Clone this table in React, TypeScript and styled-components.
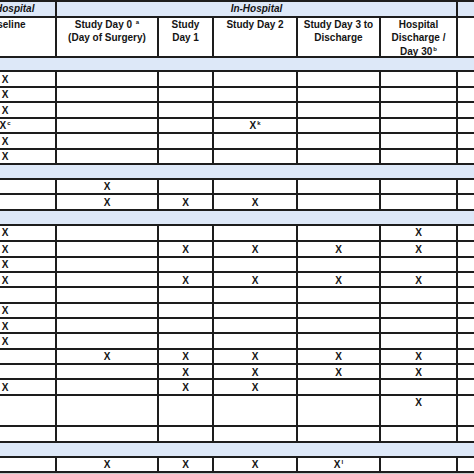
import React from "react";
import styled, { createGlobalStyle } from "styled-components";

const GlobalStyle = createGlobalStyle`
  body {
    margin: 0;
    background: #ffffff;
  }
`;

const Frame = styled.div`
  width: 474px;
  height: 474px;
  overflow: hidden;
  background: #ffffff;
`;

const Table = styled.table`
  border-collapse: collapse;
  table-layout: fixed;
  width: 583px;
  margin-left: -47px;
  font-family: "Liberation Sans", Arial, sans-serif;
  font-weight: bold;
  font-size: 10px;
  color: #141414;
`;

const Row = styled.tr<{ $h: number }>`
  height: ${(p) => p.$h}px;
`;

const Cell = styled.td`
  border: 2px solid #1d1d1d;
  padding: 1.5px 0 0;
  text-align: center;
  vertical-align: top;
  line-height: 11.5px;
`;

const BandCell = styled(Cell)`
  background: #dde8f8;
  font-style: italic;
  vertical-align: middle;
  padding: 0;
  line-height: 12px;
`;

const HeadCell = styled(Cell)`
  padding: 0;
`;

const HeadText = styled.div`
  height: 36px;
  line-height: 13.5px;
`;

const SectionCell = styled.td`
  background: #dde8f8;
  border: 2px solid #1d1d1d;
  border-left: none;
  border-right: none;
  padding: 0;
`;

const GreyCell = styled.td`
  background: #c9c9c9;
  padding: 0;
`;

const Sup = styled.sup`
  font-size: 6px;
  line-height: 0;
  vertical-align: 4px;
  margin-left: 1px;
`;

const widths = [102, 102, 55, 84, 83, 77, 80];

type Mark = "" | "X" | [string, string];

const X: Mark = "X";
const _: Mark = "";

type Line = { h: number; marks?: Mark[]; section?: boolean };

const body: Line[] = [
  { h: 14.5, section: true },
  { h: 15.7, marks: [X, _, _, _, _, _, _] },
  { h: 15.6, marks: [X, _, _, _, _, _, _] },
  { h: 15.4, marks: [X, _, _, _, _, _, _] },
  { h: 15.6, marks: [["X", "c"], _, _, ["X", "k"], _, _, _] },
  { h: 15.7, marks: [X, _, _, _, _, _, _] },
  { h: 15, marks: [X, _, _, _, _, _, _] },
  { h: 15, section: true },
  { h: 15.5, marks: [_, X, _, _, _, _, _] },
  { h: 15.5, marks: [_, X, X, X, _, _, _] },
  { h: 15, section: true },
  { h: 16.5, marks: [X, _, _, _, _, X, _] },
  { h: 15.5, marks: [X, _, X, X, X, X, _] },
  { h: 15.3, marks: [X, _, _, _, _, _, _] },
  { h: 15.2, marks: [X, _, X, X, X, X, _] },
  { h: 15.5, marks: [_, _, _, _, _, _, _] },
  { h: 15.3, marks: [X, _, _, _, _, _, _] },
  { h: 15.2, marks: [X, _, _, _, _, _, _] },
  { h: 15.5, marks: [X, _, _, _, _, _, _] },
  { h: 15.3, marks: [_, X, X, X, X, X, _] },
  { h: 15.2, marks: [_, _, X, X, X, X, _] },
  { h: 15.5, marks: [X, _, X, X, _, _, _] },
  { h: 30.7, marks: [_, _, _, _, _, X, _] },
  { h: 16.1, marks: [_, _, _, _, _, _, _] },
  { h: 15.2, section: true },
  { h: 15.5, marks: [_, X, X, X, ["X", "l"], _, _] },
];

const renderMark = (m: Mark) => {
  if (m === "") return null;
  if (typeof m === "string") return m;
  return (
    <>
      {m[0]}
      <Sup>{m[1]}</Sup>
    </>
  );
};

export default function App() {
  return (
    <Frame>
      <GlobalStyle />
      <Table>
        <colgroup>
          {widths.map((w, i) => (
            <col key={i} style={{ width: w }} />
          ))}
        </colgroup>
        <tbody>
          <Row $h={15.5}>
            <BandCell>Pre-Hospital</BandCell>
            <BandCell colSpan={5}>In-Hospital</BandCell>
            <BandCell />
          </Row>
          <Row $h={40}>
            <HeadCell>
              <HeadText>Baseline</HeadText>
            </HeadCell>
            <HeadCell>
              <HeadText>
                Study Day 0 <Sup>a</Sup>
                <br />
                (Day of Surgery)
              </HeadText>
            </HeadCell>
            <HeadCell>
              <HeadText>
                Study
                <br />
                Day 1
              </HeadText>
            </HeadCell>
            <HeadCell>
              <HeadText>Study Day 2</HeadText>
            </HeadCell>
            <HeadCell>
              <HeadText>
                Study Day 3 to
                <br />
                Discharge
              </HeadText>
            </HeadCell>
            <HeadCell>
              <HeadText>
                Hospital
                <br />
                Discharge /
                <br />
                Day 30<Sup>b</Sup>
              </HeadText>
            </HeadCell>
            <HeadCell>
              <HeadText />
            </HeadCell>
          </Row>
          {body.map((line, i) =>
            line.section ? (
              <Row key={i} $h={line.h}>
                <SectionCell colSpan={7} />
              </Row>
            ) : (
              <Row key={i} $h={line.h}>
                {line.marks!.map((m, j) => (
                  <Cell key={j}>{renderMark(m)}</Cell>
                ))}
              </Row>
            )
          )}
          <Row $h={12}>
            <GreyCell colSpan={7} />
          </Row>
        </tbody>
      </Table>
    </Frame>
  );
}
